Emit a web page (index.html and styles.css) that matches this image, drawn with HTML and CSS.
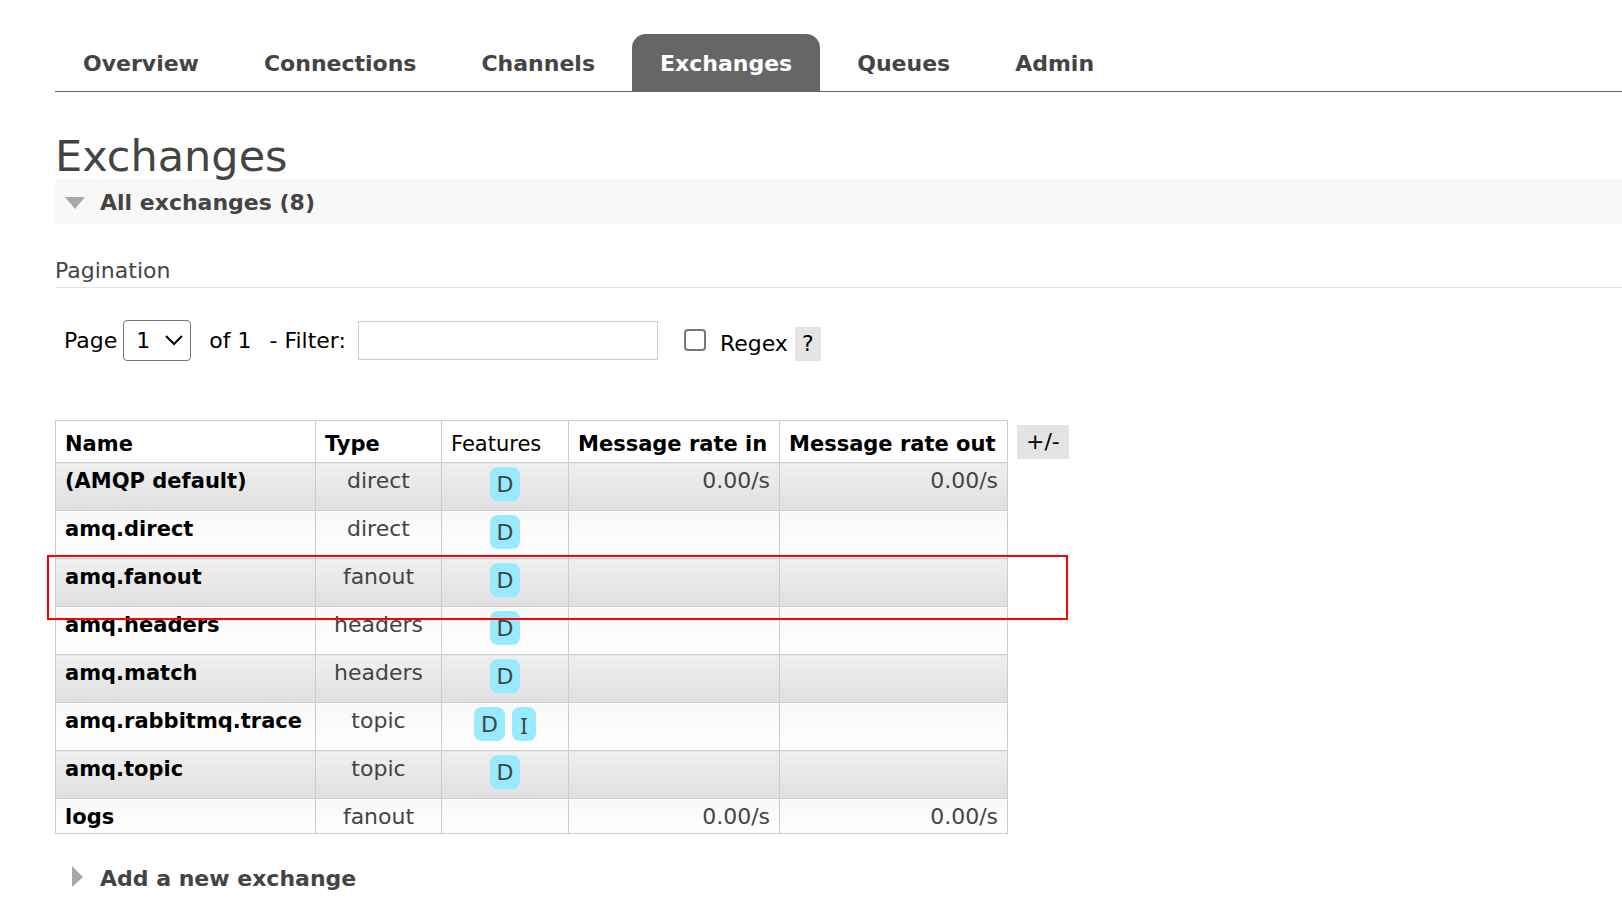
FILE: index.html
```
<!DOCTYPE html>
<html lang="en">
<head>
  <meta charset="UTF-8">
  <meta name="viewport" content="width=device-width,initial-scale=1.0">
  <title>RabbitMQ Management</title>
  <link rel="stylesheet" href="styles.css">
</head>
<body>
  <nav class="menu">
    <ul class="tabs">
      <li><a href="#/">Overview</a></li>
      <li><a href="#/connections">Connections</a></li>
      <li><a href="#/channels">Channels</a></li>
      <li><a href="#/exchanges" class="selected">Exchanges</a></li>
      <li><a href="#/queues">Queues</a></li>
      <li><a href="#/users">Admin</a></li>
    </ul>
  </nav>

  <main>
    <h1>Exchanges</h1>

    <section>
      <h2 class="section-title open">
        <svg class="arrow" width="22" height="22" viewBox="0 0 22 22"><path d="M1 5h20L11 17z"/></svg>
        All exchanges (8)
      </h2>

      <h3>Pagination</h3>
      <form class="filters">
        <div class="page-select">
          <label for="page">Page</label>
          <div class="select-wrap">
            <select id="page"><option>1</option></select>
            <svg class="chevron" width="20" height="12" viewBox="0 0 20 12"><path d="M2 2l8 8 8-8"/></svg>
          </div>
          <span class="page-total">of 1</span>
        </div>
        <div class="name-filter">
          <label for="filter">- Filter:</label>
          <input type="text" id="filter">
        </div>
        <div class="regex">
          <input type="checkbox" id="regex">
          <label for="regex">Regex</label>
          <button type="button" class="small-button help">?</button>
        </div>
      </form>

      <div class="list-wrap">
        <table class="list">
          <thead>
            <tr>
              <th class="name">Name</th>
              <th class="type">Type</th>
              <th class="plain">Features</th>
              <th class="rate-in">Message rate in</th>
              <th class="rate-out">Message rate out</th>
            </tr>
          </thead>
          <tbody>
            <tr>
              <td><a href="#/exchanges/default">(AMQP default)</a></td>
              <td class="c">direct</td>
              <td class="c features"><abbr>D</abbr></td>
              <td class="r">0.00/s</td>
              <td class="r">0.00/s</td>
            </tr>
            <tr>
              <td><a href="#/exchanges/amq.direct">amq.direct</a></td>
              <td class="c">direct</td>
              <td class="c features"><abbr>D</abbr></td>
              <td class="r"></td>
              <td class="r"></td>
            </tr>
            <tr>
              <td><a href="#/exchanges/amq.fanout">amq.fanout</a></td>
              <td class="c">fanout</td>
              <td class="c features"><abbr>D</abbr></td>
              <td class="r"></td>
              <td class="r"></td>
            </tr>
            <tr>
              <td><a href="#/exchanges/amq.headers">amq.headers</a></td>
              <td class="c">headers</td>
              <td class="c features"><abbr>D</abbr></td>
              <td class="r"></td>
              <td class="r"></td>
            </tr>
            <tr>
              <td><a href="#/exchanges/amq.match">amq.match</a></td>
              <td class="c">headers</td>
              <td class="c features"><abbr>D</abbr></td>
              <td class="r"></td>
              <td class="r"></td>
            </tr>
            <tr>
              <td><a href="#/exchanges/amq.rabbitmq.trace">amq.rabbitmq.trace</a></td>
              <td class="c">topic</td>
              <td class="c features"><abbr>D</abbr> <abbr class="internal">I</abbr></td>
              <td class="r"></td>
              <td class="r"></td>
            </tr>
            <tr>
              <td><a href="#/exchanges/amq.topic">amq.topic</a></td>
              <td class="c">topic</td>
              <td class="c features"><abbr>D</abbr></td>
              <td class="r"></td>
              <td class="r"></td>
            </tr>
            <tr>
              <td><a href="#/exchanges/logs">logs</a></td>
              <td class="c">fanout</td>
              <td class="c"></td>
              <td class="r">0.00/s</td>
              <td class="r">0.00/s</td>
            </tr>
          </tbody>
        </table>
        <button type="button" class="small-button columns">+/-</button>
        <div class="highlight"></div>
      </div>
    </section>

    <section>
      <h2 class="section-title closed">
        <svg class="arrow" width="22" height="22" viewBox="0 0 22 22"><path d="M8 0v21l11-10z"/></svg>
        Add a new exchange
      </h2>
    </section>
  </main>
</body>
</html>
```
FILE: styles.css
```
:root {
  --text: #444;
  --tab: #666;
  --line: #ccc;
  --button: #e4e4e4;
  --badge: #98ebff;
}
*, *::before, *::after { box-sizing: border-box; }
body {
  margin: 0;
  padding: 34px 0 0 55px;
  background: #fff;
  color: var(--text);
  font-family: Verdana, 'DejaVu Sans', sans-serif;
  font-size: 22px;
  line-height: 26px;
  overflow-x: hidden;
}
input, select, button {
  font: inherit;
  color: #000;
}

.menu { border-bottom: 1px solid var(--tab); }
.tabs {
  display: flex;
  gap: 9px;
  margin: 0;
  padding: 0;
  list-style: none;
}
.tabs a {
  display: block;
  padding: 17px 28px 14px;
  border-radius: 14px 14px 0 0;
  color: var(--text);
  font-weight: bold;
  text-decoration: none;
}
.tabs a.selected {
  background: var(--tab);
  color: #fff;
}

h1 {
  margin: 41px 0 0;
  font-size: 43px;
  font-weight: normal;
  line-height: 46px;
}

.section-title {
  display: flex;
  align-items: center;
  gap: 14px;
  margin: 0;
  padding: 11px 9px 8px;
  font-size: 22px;
}
.section-title.open { background: #f8f8f8; }
.section-title.closed {
  align-items: flex-start;
  margin-top: 21px;
}
.arrow { fill: #a8a8a8; }

h3 {
  margin: 34px 0 0;
  padding-bottom: 3px;
  border-bottom: 1px solid #e4e4e4;
  font-size: 22px;
  font-weight: normal;
}

.filters {
  display: flex;
  align-items: flex-start;
  padding: 32px 9px 0;
  color: #000;
}
.page-select {
  display: flex;
  align-items: center;
  gap: 6px;
}
.select-wrap { position: relative; }
.select-wrap select {
  display: block;
  width: 68px;
  height: 41px;
  padding: 0 12px;
  appearance: none;
  background: #fff;
  border: 1px solid #767676;
  border-radius: 4px;
}
.chevron {
  position: absolute;
  top: 14px;
  right: 7px;
  fill: none;
  stroke: #000;
  stroke-width: 2;
  pointer-events: none;
}
.page-total { margin-left: 12px; }
.name-filter {
  display: flex;
  align-items: center;
  gap: 12px;
  margin-left: 18px;
  padding-top: 1px;
}
.name-filter input {
  width: 300px;
  height: 39px;
  padding: 0 8px;
  border: 1px solid var(--line);
}
.regex {
  display: flex;
  align-items: center;
  gap: 7px;
  margin-left: 26px;
  padding-top: 7px;
}
.regex input {
  width: 22px;
  height: 22px;
  margin: 0 7px 8px 0;
  appearance: none;
  background: #fff;
  border: 2px solid #767676;
  border-radius: 4px;
}

.small-button {
  height: 34px;
  padding: 0 9px;
  background: var(--button);
  border: 0;
  cursor: pointer;
}
.help { padding: 0 7px; }

.list-wrap {
  position: relative;
  display: flex;
  align-items: flex-start;
  gap: 9px;
  margin-top: 59px;
}
.list { border-collapse: collapse; }
.list th,
.list td {
  padding: 5px 9px 3px;
  border: 1px solid var(--line);
  text-align: left;
  vertical-align: top;
}
.list th {
  padding: 10px 9px 5px;
  color: #000;
  font-size: 21px;
  white-space: nowrap;
}
.list .name { width: 260px; }
.list .type { width: 126px; }
.list .plain { width: 127px; font-weight: normal; }
.list .rate-in { width: 211px; }
.list .rate-out { width: 228px; }
.list .c { text-align: center; }
.list .r { text-align: right; }
.list td a {
  color: #000;
  font-size: 21px;
  font-weight: bold;
  text-decoration: none;
}
.list tbody tr:nth-child(odd) td { background: linear-gradient(#f0f0f0, #dfdfdf); }
.list tbody tr:nth-child(even) td { background: linear-gradient(#f8f8f8, #fff); }
.list .features { padding: 4px 0 9px; }
.features abbr {
  display: inline-block;
  min-width: 24px;
  padding: 5px 7px 3px;
  background: var(--badge);
  border-radius: 8px;
  vertical-align: top;
}
.features .internal { font-family: 'Noto Sans', sans-serif; }
.columns { margin-top: 5px; }

/* box around the amq.fanout row */
.highlight {
  position: absolute;
  top: 135px;
  left: -8px;
  width: 1021px;
  height: 65px;
  border: 2px solid #f00;
  pointer-events: none;
}
```
